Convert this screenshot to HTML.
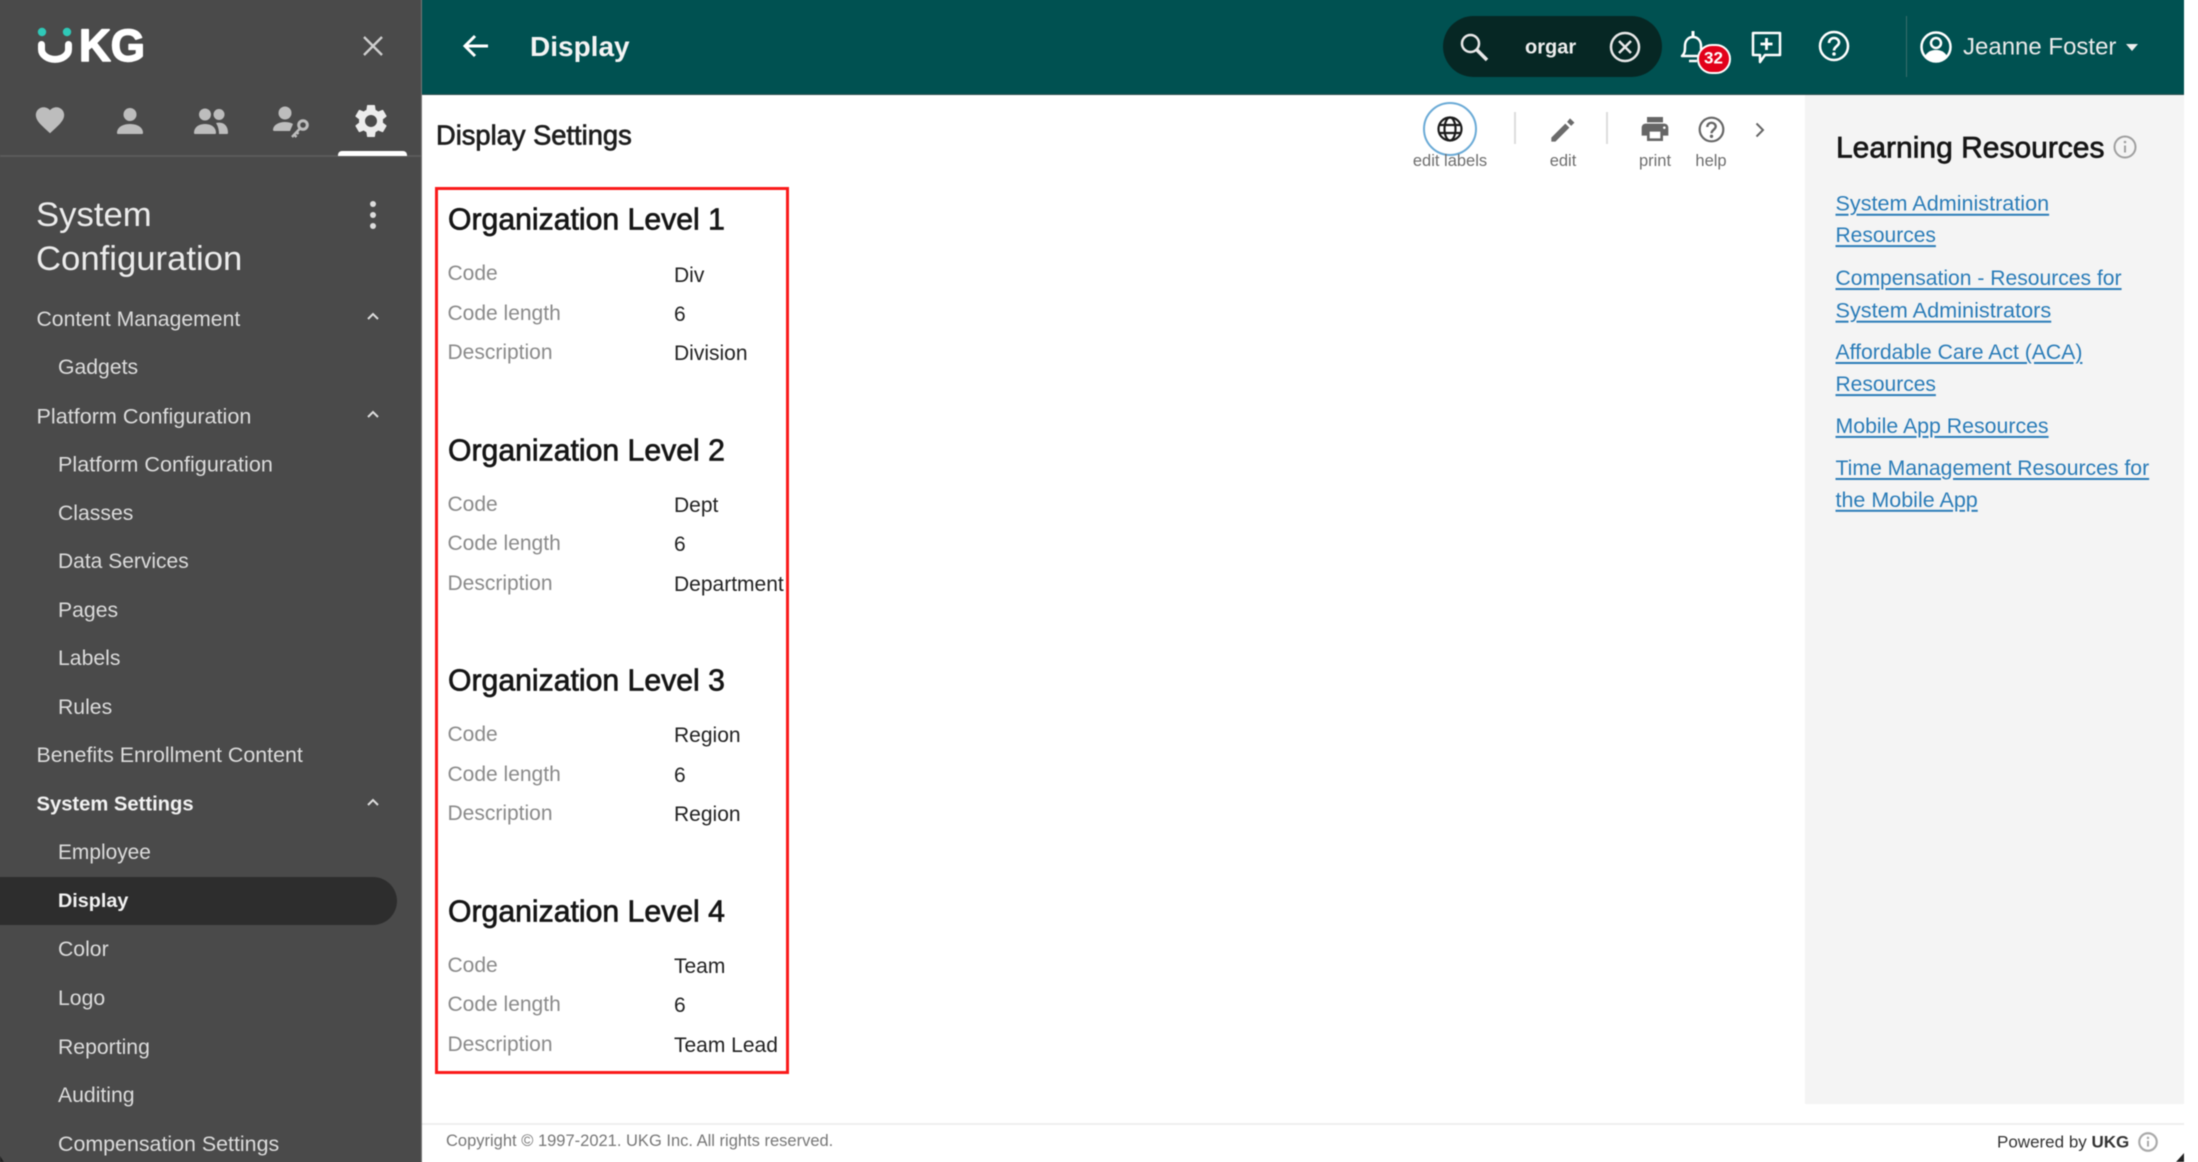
<!DOCTYPE html>
<html><head><meta charset="utf-8"><title>Display</title>
<style>
html,body{margin:0;padding:0;background:#fff;}
#o{position:relative;width:2198px;height:1162px;overflow:hidden;background:#fff;}
#p{position:absolute;left:0;top:0;width:2198px;height:1162px;font-family:"Liberation Sans",Arial,sans-serif;filter:blur(.45px);}
.a{position:absolute;}
.t{position:absolute;white-space:nowrap;transform:translateY(calc(-50% + .7px));line-height:1.2;}
svg{position:absolute;overflow:visible;}
.n{font-size:21.2px;color:#dcdcdc;left:36.500px;}
.s{left:58px;}
.nb{font-size:20.200px;font-weight:700;color:#f2f2f2;}
.h{font-size:30.200px;color:#161616;left:448px;-webkit-text-stroke:.7px #161616;}
.l{font-size:21px;color:#8a8a8a;left:447.500px;}
.v{font-size:21px;color:#222;left:674px;}
.q{font-size:21.300px;color:#2a7cb8;left:1835.500px;text-decoration:underline;text-underline-offset:3px;}
.b{font-size:16.500px;color:#6e6e6e;text-align:center;transform:translate(-50%,calc(-50% + 1px));}
</style></head><body><div id="o"><div id="p">

<!-- header -->
<div class="a" style="left:421px;top:-10px;width:1763px;height:105px;background:#005151;border-bottom:1px solid #2f4f4f;box-sizing:border-box"></div>
<!-- sidebar -->
<div class="a" style="left:-10px;top:-10px;width:431px;height:1182px;background:#4a4a4a;border-right:1px solid #777"></div>

<!-- logo -->
<svg style="left:0;top:0" width="200" height="80">
  <path d="M41.500 44.500v5a13 9.500 0 0 0 27 0v-5" fill="none" stroke="#fff" stroke-width="7" stroke-linecap="round"/>
  <circle cx="42" cy="32" r="4.200" fill="#2fc9b8"/><circle cx="67" cy="32" r="4.200" fill="#2fc9b8"/>
  <text x="79" y="61" font-family="Liberation Sans" font-weight="700" font-size="45" fill="#fff" stroke="#fff" stroke-width="1.500" stroke-linejoin="round" textLength="66" lengthAdjust="spacingAndGlyphs">KG</text>
</svg>
<!-- close -->
<svg style="left:363px;top:36px" width="20" height="20" viewBox="0 0 20 20"><path d="M1 1l18 18M19 1L1 19" stroke="#cfcfcf" stroke-width="2.400" fill="none"/></svg>

<!-- tab icons -->
<svg style="left:33px;top:103px" width="34" height="34" viewBox="0 0 24 24"><path fill="#bdbdbd" d="M12 21.350l-1.450-1.320C5.400 15.360 2 12.280 2 8.500 2 5.420 4.420 3 7.500 3c1.740 0 3.410.81 4.500 2.090C13.090 3.810 14.760 3 16.500 3 19.580 3 22 5.420 22 8.500c0 3.780-3.400 6.860-8.550 11.540L12 21.350z"/></svg>
<svg style="left:115px;top:105px" width="30" height="30" viewBox="0 0 30 30" fill="#bdbdbd"><circle cx="15" cy="9.500" r="6.500"/><path d="M2 28c0-6 6-9 13-9s13 3 13 9c0 .6-.4 1-1 1H3c-.6 0-1-.4-1-1z"/></svg>
<svg style="left:193px;top:107px" width="36" height="27" viewBox="0 0 36 27" fill="#bdbdbd"><circle cx="12" cy="7.500" r="6"/><circle cx="26" cy="7.500" r="5.500"/><path d="M1 26c0-6 5-9 11-9s11 3 11 9c0 .5-.4 1-1 1H2c-.6 0-1-.5-1-1z"/><path d="M23 16c1-.3 2-.4 3-.4 5 0 9 3 9 10.400 0 .5-.4 1-1 1h-8c0-4-1-8-3-11z"/></svg>
<svg style="left:272px;top:105px" width="38" height="35" viewBox="0 0 38 35"><g fill="#bdbdbd"><circle cx="13" cy="8" r="6.500"/><path d="M1 25c0-5 6-8 12-8 3 0 6 .6 8 2l-3 7H2.500C1.500 26 1 25.500 1 25z"/></g><circle cx="31" cy="20" r="4.300" fill="none" stroke="#bdbdbd" stroke-width="3"/><path d="M28 23.500L20 32m2-2.500l2.500 2.500M24.500 27l2 2" stroke="#bdbdbd" stroke-width="2.500" fill="none"/></svg>
<svg style="left:351px;top:101px" width="40" height="40" viewBox="0 0 24 24"><path fill="#ececec" d="M19.140 12.940c.04-.3.06-.61.06-.94 0-.32-.02-.64-.07-.94l2.030-1.580c.18-.14.23-.41.12-.61l-1.920-3.320c-.12-.22-.37-.29-.59-.22l-2.390.96c-.5-.38-1.030-.7-1.620-.94l-.36-2.540c-.04-.24-.24-.41-.48-.41h-3.840c-.24 0-.43.17-.47.41l-.36 2.540c-.59.24-1.130.57-1.620.94l-2.390-.96c-.22-.08-.47 0-.59.22L2.740 8.870c-.12.21-.08.47.12.61l2.030 1.580c-.05.3-.09.63-.09.94s.02.64.07.94l-2.030 1.580c-.18.14-.23.41-.12.61l1.920 3.320c.12.22.37.29.59.22l2.390-.96c.5.38 1.030.7 1.620.94l.36 2.540c.05.24.24.41.48.41h3.840c.24 0 .44-.17.47-.41l.36-2.540c.59-.24 1.130-.56 1.620-.94l2.390.96c.22.08.47 0 .59-.22l1.920-3.320c.12-.22.07-.47-.12-.61l-2.010-1.580zM12 15.600c-1.980 0-3.600-1.620-3.600-3.600s1.620-3.600 3.600-3.600 3.600 1.620 3.600 3.600-1.620 3.600-3.600 3.600z"/></svg>
<div class="a" style="left:0;top:155px;width:421px;height:2px;background:#5a5a5a"></div>
<div class="a" style="left:338px;top:151px;width:69px;height:5px;background:#fff;border-radius:4px 4px 0 0"></div>

<div class="t" style="left:36px;top:215px;font-size:34.700px;color:#ececec">System</div>
<div class="t" style="left:36px;top:259px;font-size:34.700px;color:#ececec">Configuration</div>
<svg style="left:368px;top:200px" width="10" height="30"><circle cx="5" cy="4" r="3" fill="#ddd"/><circle cx="5" cy="15" r="3" fill="#ddd"/><circle cx="5" cy="26" r="3" fill="#ddd"/></svg>

<!-- active pill -->
<div class="a" style="left:-10px;top:877px;width:407px;height:48px;background:#2d2d2d;border-radius:0 24px 24px 0"></div>

<div class="t n" style="top:319px">Content Management</div>
<div class="t n s" style="top:367px">Gadgets</div>
<div class="t n" style="top:416px;font-size:21.600px">Platform Configuration</div>
<div class="t n s" style="top:464px;font-size:21.600px">Platform Configuration</div>
<div class="t n s" style="top:513px">Classes</div>
<div class="t n s" style="top:561px;font-size:21px">Data Services</div>
<div class="t n s" style="top:610px">Pages</div>
<div class="t n s" style="top:658px">Labels</div>
<div class="t n s" style="top:707px">Rules</div>
<div class="t n" style="top:755px;font-size:21.400px">Benefits Enrollment Content</div>
<div class="t n nb" style="top:804px">System Settings</div>
<div class="t n s" style="top:852px;font-size:20.900px">Employee</div>
<div class="t n s nb" style="top:901px;font-size:19.800px">Display</div>
<div class="t n s" style="top:949px">Color</div>
<div class="t n s" style="top:998px">Logo</div>
<div class="t n s" style="top:1047px">Reporting</div>
<div class="t n s" style="top:1095px">Auditing</div>
<div class="t n s" style="top:1144px;font-size:21.400px">Compensation Settings</div>
<svg style="left:367px;top:312px" width="12" height="8"><path d="M1 7l5-5 5 5" stroke="#ddd" stroke-width="2" fill="none"/></svg>
<svg style="left:367px;top:410px" width="12" height="8"><path d="M1 7l5-5 5 5" stroke="#ddd" stroke-width="2" fill="none"/></svg>
<svg style="left:367px;top:798px" width="12" height="8"><path d="M1 7l5-5 5 5" stroke="#ddd" stroke-width="2" fill="none"/></svg>

<!-- header contents -->
<svg style="left:462px;top:32px" width="28" height="28" viewBox="0 0 28 28"><path d="M26 14H4M13 4L3 14l10 10" stroke="#fff" stroke-width="3" fill="none"/></svg>
<div class="t" style="left:530px;top:46px;font-size:28px;font-weight:700;color:#f4f4f4">Display</div>

<div class="a" style="left:1443px;top:16px;width:219px;height:61px;border-radius:31px;background:#062724"></div>
<svg style="left:1459px;top:32px" width="30" height="30" viewBox="0 0 30 30"><circle cx="11.500" cy="11.500" r="8.500" fill="none" stroke="#e8e8e8" stroke-width="2.500"/><path d="M18 18l10 10" stroke="#e8e8e8" stroke-width="3.500"/></svg>
<div class="t" style="left:1525px;top:47px;font-size:20px;font-weight:700;color:#eee">orgar</div>
<svg style="left:1609px;top:31px" width="32" height="32" viewBox="0 0 32 32"><circle cx="16" cy="16" r="14" fill="none" stroke="#e8e8e8" stroke-width="2.500"/><path d="M10 10l12 12M22 10L10 22" stroke="#e8e8e8" stroke-width="2.500"/></svg>

<svg style="left:1680px;top:30px" width="28" height="36" viewBox="0 0 28 36"><path d="M2 26c3-3 3-5 3-10 0-5 3-9 8-9s8 4 8 9c0 5 0 7 3 10z" fill="none" stroke="#fff" stroke-width="2.500" stroke-linejoin="round"/><path d="M13 1v5" stroke="#fff" stroke-width="3"/><path d="M9 31h8" stroke="#fff" stroke-width="2.500"/></svg>
<div class="a" style="left:1697px;top:44px;width:34px;height:30px;box-sizing:border-box;background:#e2001a;border:2.500px solid #fff;border-radius:15px"></div>
<div class="t" style="left:1704px;top:58px;font-size:17px;font-weight:700;color:#fff">32</div>
<svg style="left:1751px;top:31px" width="31" height="34" viewBox="0 0 31 34"><path d="M2 2h27v22H14l-5 7v-7H2z" fill="none" stroke="#fff" stroke-width="2.500" stroke-linejoin="round"/><path d="M15.500 7v12M9.500 13h12" stroke="#fff" stroke-width="2.800"/></svg>
<svg style="left:1818px;top:30px" width="32" height="32" viewBox="0 0 32 32"><circle cx="16" cy="16" r="14" fill="none" stroke="#fff" stroke-width="2.500"/><path d="M11 13c0-3 2.300-5 5-5s5 2 5 4.500c0 3.500-5 4-5 8" fill="none" stroke="#fff" stroke-width="2.600"/><circle cx="16" cy="24" r="1.800" fill="#fff"/></svg>
<div class="a" style="left:1906px;top:16px;width:1px;height:61px;background:#3a6e6c"></div>
<svg style="left:1920px;top:31px" width="32" height="32" viewBox="0 0 32 32"><circle cx="16" cy="16" r="14.500" fill="none" stroke="#fff" stroke-width="2.500"/><circle cx="16" cy="12" r="5" fill="none" stroke="#fff" stroke-width="2.500"/><path d="M5 25c3-5 7-6 11-6s8 1 11 6c-3 3-7 6-11 6s-8-3-11-6z" fill="#fff"/></svg>
<div class="t" style="left:1963px;top:47px;font-size:24px;color:#eaeaea">Jeanne Foster</div>
<svg style="left:2126px;top:44px" width="12" height="7"><path d="M0 0h12L6 7z" fill="#eee"/></svg>

<!-- toolbar -->
<div class="t" style="left:436px;top:135px;font-size:27.300px;color:#1e1e1e;-webkit-text-stroke:.7px #1e1e1e">Display Settings</div>

<div class="a" style="left:1423px;top:102px;width:54px;height:54px;box-sizing:border-box;border:2.500px solid #6aaad6;border-radius:50%"></div>
<svg style="left:1437px;top:116px" width="26" height="26" viewBox="0 0 26 26" fill="none" stroke="#1c1c1c" stroke-width="2.200"><circle cx="13" cy="13" r="11.500"/><ellipse cx="13" cy="13" rx="5.500" ry="11.500"/><path d="M2 9h22M2 17h22"/></svg>
<div class="t b" style="left:1450px;top:161px">edit labels</div>
<div class="a" style="left:1514px;top:112px;width:2px;height:32px;background:#ddd"></div>
<svg style="left:1549px;top:116px" width="28" height="28" viewBox="0 0 24 24"><path fill="#6b6b6b" d="M2 18.500V22h3.500L17.500 10l-3.500-3.500zM15.500 5L19 8.500l2.800-2.800L18 2z"/></svg>
<div class="t b" style="left:1563px;top:161px">edit</div>
<div class="a" style="left:1606px;top:112px;width:2px;height:32px;background:#ddd"></div>
<svg style="left:1639px;top:113px" width="32" height="32" viewBox="0 0 24 24"><path fill="#666" d="M19 8H5c-1.660 0-3 1.340-3 3v6h4v4h12v-4h4v-6c0-1.660-1.340-3-3-3zm-3 11H8v-5h8v5zm3-7c-.55 0-1-.45-1-1s.45-1 1-1 1 .45 1 1-.45 1-1 1zm-1-9H6v4h12V3z"/></svg>
<div class="t b" style="left:1655px;top:161px">print</div>
<svg style="left:1698px;top:116px" width="27" height="27" viewBox="0 0 32 32"><circle cx="16" cy="16" r="14" fill="none" stroke="#666" stroke-width="2.600"/><path d="M11 13c0-3 2.300-5 5-5s5 2 5 4.500c0 3.500-5 4-5 8" fill="none" stroke="#666" stroke-width="2.800"/><circle cx="16" cy="24" r="2" fill="#666"/></svg>
<div class="t b" style="left:1711px;top:161px">help</div>
<svg style="left:1755px;top:122px" width="10" height="16"><path d="M1.500 1.500L8 8l-6.500 6.500" stroke="#666" stroke-width="2" fill="none"/></svg>

<!-- red box -->
<div class="a" style="left:435px;top:186.500px;width:354px;height:887.500px;box-sizing:border-box;border:3px solid #fa1a1a"></div>

<div class="t h" style="top:220px">Organization Level 1</div>
<div class="t l" style="top:273px">Code</div><div class="t v" style="top:275px">Div</div>
<div class="t l" style="top:313px">Code length</div><div class="t v" style="top:314px">6</div>
<div class="t l" style="top:352px">Description</div><div class="t v" style="top:353px">Division</div>

<div class="t h" style="top:451px">Organization Level 2</div>
<div class="t l" style="top:504px">Code</div><div class="t v" style="top:505px">Dept</div>
<div class="t l" style="top:543px">Code length</div><div class="t v" style="top:544px">6</div>
<div class="t l" style="top:583px">Description</div><div class="t v" style="top:584px">Department</div>

<div class="t h" style="top:681px">Organization Level 3</div>
<div class="t l" style="top:734px">Code</div><div class="t v" style="top:735px">Region</div>
<div class="t l" style="top:774px">Code length</div><div class="t v" style="top:775px">6</div>
<div class="t l" style="top:813px">Description</div><div class="t v" style="top:814px">Region</div>

<div class="t h" style="top:912px">Organization Level 4</div>
<div class="t l" style="top:965px">Code</div><div class="t v" style="top:966px">Team</div>
<div class="t l" style="top:1004px">Code length</div><div class="t v" style="top:1005px">6</div>
<div class="t l" style="top:1044px">Description</div><div class="t v" style="top:1045px">Team Lead</div>

<!-- right panel -->
<div class="a" style="left:1805px;top:95px;width:379px;height:1009px;background:#f4f4f4"></div>
<div class="t" style="left:1836px;top:148px;font-size:30px;color:#161616;-webkit-text-stroke:.7px #161616">Learning Resources</div>
<svg style="left:2113px;top:135px" width="24" height="24" viewBox="0 0 24 24"><circle cx="12" cy="12" r="10.500" fill="none" stroke="#a0a0a0" stroke-width="2"/><path d="M12 10.500v7" stroke="#a0a0a0" stroke-width="2"/><circle cx="12" cy="7" r="1.300" fill="#a0a0a0"/></svg>
<div class="t q" style="top:203px;font-size:21.600px">System Administration</div>
<div class="t q" style="top:235px;font-size:21px">Resources</div>
<div class="t q" style="top:278px;font-size:21.100px">Compensation - Resources for</div>
<div class="t q" style="top:310px;font-size:21.700px">System Administrators</div>
<div class="t q" style="top:352px;font-size:21.200px">Affordable Care Act (ACA)</div>
<div class="t q" style="top:384px;font-size:21px">Resources</div>
<div class="t q" style="top:426px">Mobile App Resources</div>
<div class="t q" style="top:468px;font-size:21.200px">Time Management Resources for</div>
<div class="t q" style="top:500px;font-size:21.500px">the Mobile App</div>

<!-- footer -->
<div class="a" style="left:422px;top:1123px;width:1762px;height:2px;background:#eee"></div>
<div class="t" style="left:446px;top:1141px;font-size:16.500px;color:#777">Copyright © 1997-2021. UKG Inc. All rights reserved.</div>
<div class="t" style="left:1997px;top:1142px;font-size:17px;color:#333">Powered by <b>UKG</b></div>
<svg style="left:2138px;top:1132px" width="20" height="20" viewBox="0 0 24 24"><circle cx="12" cy="12" r="10.500" fill="none" stroke="#aaa" stroke-width="2.600"/><path d="M12 10.500v7" stroke="#aaa" stroke-width="2.400"/><circle cx="12" cy="7" r="1.500" fill="#aaa"/></svg>

<!-- window corners -->
<svg style="left:2176px;top:1152px" width="8" height="10"><path d="M8 1v9H0z" fill="#222"/></svg>
<svg style="left:0;top:1156px" width="4" height="6"><path d="M0 0l4 6H0z" fill="#222"/></svg>

</div></div></body></html>
